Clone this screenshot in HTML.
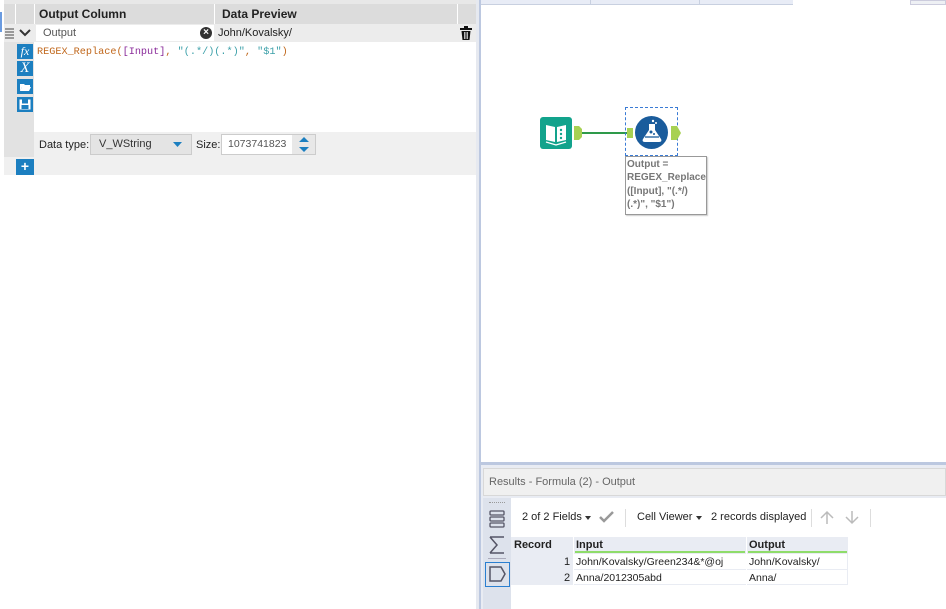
<!DOCTYPE html>
<html><head><meta charset="utf-8"><style>
*{margin:0;padding:0;box-sizing:border-box}
body{width:946px;height:609px;overflow:hidden;background:#fff;font-family:"Liberation Sans",sans-serif;font-size:11px;color:#222;position:relative}
.a{position:absolute}
.mono{font-family:"Liberation Mono",monospace}
</style></head><body>
<div class="a" style="left:0;top:0;width:478px;height:609px;background:#fff"></div>
<div class="a" style="left:0;top:12px;width:2px;height:20px;background:#6a9be0"></div>
<div class="a" style="left:4px;top:0;width:472px;height:4px;background:#e8e8e8"></div>
<div class="a" style="left:4px;top:4px;width:472px;height:20px;background:#dcdcdc"></div>
<div class="a" style="left:15px;top:4px;width:1px;height:171px;background:#fff"></div>
<div class="a" style="left:34px;top:4px;width:1px;height:20px;background:#fff"></div>
<div class="a" style="left:214px;top:4px;width:1px;height:20px;background:#fff"></div>
<div class="a" style="left:457px;top:4px;width:1px;height:20px;background:#fff"></div>
<div class="a" style="left:39px;top:7px;font-weight:bold;font-size:12px">Output Column</div>
<div class="a" style="left:222px;top:7px;font-weight:bold;font-size:12px">Data Preview</div>
<div class="a" style="left:4px;top:24px;width:472px;height:18px;background:#ececec"></div>
<div class="a" style="left:4px;top:42px;width:30px;height:115px;background:#e2e2e2"></div>
<div class="a" style="left:5px;top:28px;width:9px;height:1.5px;background:#999;box-shadow:0 3px #999,0 6px #999,0 9px #999"></div>
<svg class="a" style="left:19px;top:28px" width="12" height="10"><path d="M1 2l5 5 5-5" stroke="#333" stroke-width="2" fill="none"/></svg>
<div class="a" style="left:36px;top:25px;width:178px;height:16px;background:#fff"></div>
<div class="a" style="left:43px;top:27px;color:#555;font-size:11px">Output</div>
<div class="a" style="left:200px;top:27px;width:12px;height:12px;border-radius:50%;background:#333;color:#fff;font-size:10px;line-height:12px;text-align:center;font-weight:bold">×</div>
<div class="a" style="left:218px;top:27px;font-size:11px">John/Kovalsky/</div>
<svg class="a" style="left:460px;top:26px" width="12" height="14"><rect x="0" y="2" width="12" height="2" fill="#111"/><rect x="4" y="0" width="4" height="2" fill="#111"/><path d="M1.5 5h9l-1 9h-7z" fill="#111"/><path d="M4.5 6v7M6 6v7M7.5 6v7" stroke="#fff" stroke-width=".7"/></svg>
<div class="a" style="left:34px;top:42px;width:442px;height:90px;background:#fff"></div>
<div class="a" style="left:17px;top:44px;width:16px;height:15px;background:#1c7fc0;color:#fff;font-family:'Liberation Serif',serif;font-style:italic;font-size:12px;text-align:center;line-height:14px">fx</div>
<div class="a" style="left:17px;top:61px;width:16px;height:15px;background:#1c7fc0;color:#fff;font-family:'Liberation Serif',serif;font-style:italic;font-size:15px;text-align:center;line-height:15px">X</div>
<div class="a" style="left:17px;top:79px;width:16px;height:15px;background:#1c7fc0"></div>
<svg class="a" style="left:19px;top:82px" width="12" height="10"><path d="M1 2h4l1 1h5v2H3L1 9z" fill="#fff"/><path d="M3 5h9l-2 4H1z" fill="#fff"/></svg>
<div class="a" style="left:17px;top:97px;width:16px;height:15px;background:#1c7fc0"></div>
<svg class="a" style="left:19px;top:99px" width="12" height="11"><rect x="0.5" y="0.5" width="11" height="10" fill="#fff"/><rect x="3" y="0.5" width="6" height="4" fill="#1c7fc0"/><rect x="2.5" y="6" width="7" height="4" fill="#1c7fc0"/></svg>
<div class="a mono" style="left:37px;top:47px;font-size:10.2px;white-space:pre"><span style="color:#c0661a">REGEX_Replace(</span><span style="color:#8a2b9a">[Input]</span><span style="color:#c0661a">, </span><span style="color:#3a9fa8">"(.*/)(.*)"</span><span style="color:#c0661a">, </span><span style="color:#3a9fa8">"$1"</span><span style="color:#c0661a">)</span></div>
<div class="a" style="left:34px;top:132px;width:442px;height:25px;background:#f0f0f0"></div>
<div class="a" style="left:39px;top:139px;font-size:11px">Data type:</div>
<div class="a" style="left:90px;top:134px;width:102px;height:21px;background:#e4e4e4;border:1px solid #ccc"></div>
<div class="a" style="left:99px;top:138px;font-size:11px;color:#333">V_WString</div>
<svg class="a" style="left:173px;top:142px" width="9" height="5"><path d="M0 0h9L4.5 5z" fill="#1c7fc0"/></svg>
<div class="a" style="left:196px;top:139px;font-size:11px">Size:</div>
<div class="a" style="left:221px;top:134px;width:95px;height:21px;background:#fff;border:1px solid #ccc"></div>
<div class="a" style="left:228px;top:138px;font-size:10.5px;color:#555">1073741823</div>
<div class="a" style="left:292px;top:135px;width:23px;height:19px;background:#e8e8e8"></div>
<svg class="a" style="left:299px;top:137px" width="10" height="15"><path d="M0 5L5 0l5 5z M0 10l5 5 5-5z" fill="#1c7fc0"/></svg>
<div class="a" style="left:4px;top:157px;width:472px;height:18px;background:#f0f0f0"></div>
<div class="a" style="left:16px;top:159px;width:18px;height:16px;background:#1c7fc0;color:#fff;font-weight:bold;font-size:14px;text-align:center;line-height:15px">+</div>
<div class="a" style="left:476px;top:0;width:4px;height:609px;background:#e6e9f0"></div>
<div class="a" style="left:479px;top:0;width:2px;height:609px;background:#bcc8e0"></div>
<div class="a" style="left:481px;top:0;width:465px;height:464px;background:#fff"></div>
<div class="a" style="left:481px;top:0;width:312px;height:5px;background:#e8ecf6;border-bottom:1px solid #c8d0e0"></div>
<div class="a" style="left:590px;top:0;width:1px;height:5px;background:#c8d0e0"></div>
<div class="a" style="left:699px;top:0;width:1px;height:5px;background:#c8d0e0"></div>
<div class="a" style="left:910px;top:0;width:36px;height:5px;background:#eef0f4;border:1px solid #ccd"></div>
<div class="a" style="left:481px;top:462px;width:465px;height:3px;background:#bcc8e0"></div>
<div class="a" style="left:540px;top:117px;width:32px;height:32px;background:#12a38c;border-radius:3px"></div>
<svg class="a" style="left:543px;top:121px" width="26" height="26"><path d="M3 4l9 2v15l-9-2z M23 4l-9 2v15l9-2z" fill="#fff"/><circle cx="18" cy="9" r="1.2" fill="#12a38c"/><circle cx="18" cy="13" r="1.2" fill="#12a38c"/><circle cx="18" cy="17" r="1.2" fill="#12a38c"/><path d="M3 21l10 3 10-3" stroke="#fff" stroke-width="1.3" fill="none"/></svg>
<svg class="a" style="left:574px;top:126px" width="8" height="14"><path d="M0 0h5l3 3v8l-3 3H0z" fill="#a7d153"/></svg>
<div class="a" style="left:582px;top:132px;width:45px;height:2px;background:#2e9a4a"></div>
<div class="a" style="left:625px;top:107px;width:53px;height:49px;border:1px dashed #3a7bd5"></div>
<div class="a" style="left:627px;top:128px;width:6px;height:10px;background:#a7d153"></div>
<div class="a" style="left:635px;top:116px;width:33px;height:33px;border-radius:50%;background:#1a5c9c"></div>
<svg class="a" style="left:638px;top:118px" width="28" height="28"><path d="M11 6v6l-6 9c-1 2 0 3 2 3h14c2 0 3-1 2-3l-6-9V6z" fill="#fff"/><path d="M7 19h14" stroke="#1a5c9c" stroke-width="1.3"/><circle cx="13" cy="14" r="1.5" fill="#1a5c9c"/><circle cx="16" cy="16" r="1" fill="#1a5c9c"/><circle cx="15" cy="3" r="1.2" fill="#fff"/><circle cx="18" cy="5" r="1" fill="#fff"/></svg>
<svg class="a" style="left:671px;top:126px" width="10" height="14"><path d="M0 0h6l4 7-4 7H0z" fill="#a7d153"/></svg>
<div class="a" style="left:625px;top:156px;width:82px;height:59px;border:1px solid #999;background:#fff;box-shadow:1px 1px 1px #ccc"></div>
<div class="a" style="left:627px;top:158px;font-size:10px;line-height:13.3px;color:#777;font-weight:bold">Output =<br>REGEX_Replace<br>([Input], "(.*/)<br>(.*)", "$1")</div>
<div class="a" style="left:481px;top:465px;width:465px;height:144px;background:#e9ecf3"></div>
<div class="a" style="left:483px;top:468px;width:463px;height:28px;background:#f0f0f0;border:1px solid #d8d8d8"></div>
<div class="a" style="left:489px;top:476px;font-size:11px;color:#666">Results - Formula (2) - Output</div>
<div class="a" style="left:483px;top:498px;width:28px;height:111px;background:#dde2ec"></div>
<div class="a" style="left:489px;top:502px;width:16px;height:1px;border-top:1px dotted #999"></div>
<svg class="a" style="left:489px;top:510px" width="16" height="18"><rect x="1" y="1" width="14" height="4" rx="1" stroke="#556" fill="none" stroke-width="1.3"/><rect x="1" y="7" width="14" height="4" rx="1" stroke="#556" fill="none" stroke-width="1.3"/><rect x="1" y="13" width="14" height="4" rx="1" stroke="#556" fill="none" stroke-width="1.3"/></svg>
<svg class="a" style="left:489px;top:536px" width="16" height="18"><path d="M1 1h14M1 17h14M1 1l7 8-7 8" stroke="#556" fill="none" stroke-width="1.5"/></svg>
<div class="a" style="left:488px;top:558px;width:18px;height:1px;background:#aab"></div>
<div class="a" style="left:485px;top:562px;width:25px;height:25px;border:1px solid #2a7fd0"></div>
<svg class="a" style="left:489px;top:566px" width="18" height="16"><path d="M1 1h11l4 7-4 7H1z" stroke="#556" fill="none" stroke-width="1.5"/></svg>
<div class="a" style="left:511px;top:498px;width:435px;height:40px;background:#fff"></div>
<div class="a" style="left:511px;top:538px;width:435px;height:71px;background:#fff"></div>
<div class="a" style="left:522px;top:511px;font-size:11px">2 of 2 Fields</div>
<svg class="a" style="left:585px;top:516px" width="6" height="4"><path d="M0 0h6L3 4z" fill="#333"/></svg>
<svg class="a" style="left:599px;top:511px" width="16" height="12"><path d="M1 6l4 4 9-9" stroke="#999" stroke-width="2.5" fill="none"/></svg>
<div class="a" style="left:625px;top:509px;width:1px;height:18px;background:#ddd"></div>
<div class="a" style="left:637px;top:511px;font-size:11px">Cell Viewer</div>
<svg class="a" style="left:696px;top:516px" width="6" height="4"><path d="M0 0h6L3 4z" fill="#333"/></svg>
<div class="a" style="left:711px;top:511px;font-size:11px">2 records displayed</div>
<div class="a" style="left:811px;top:509px;width:1px;height:18px;background:#ddd"></div>
<svg class="a" style="left:820px;top:510px" width="14" height="15"><path d="M7 14V2M1 8l6-6 6 6" stroke="#bbb" stroke-width="1.5" fill="none"/></svg>
<svg class="a" style="left:845px;top:510px" width="14" height="15"><path d="M7 1v12M1 7l6 6 6-6" stroke="#bbb" stroke-width="1.5" fill="none"/></svg>
<div class="a" style="left:870px;top:509px;width:1px;height:18px;background:#ddd"></div>
<div class="a" style="left:511px;top:537px;width:337px;height:48px;background:#e9ecf3"></div>
<div class="a" style="left:514px;top:539px;font-weight:bold;font-size:11px">Record</div>
<div class="a" style="left:573px;top:537px;width:1px;height:48px;background:#fff"></div>
<div class="a" style="left:746px;top:537px;width:1px;height:48px;background:#fff"></div>
<div class="a" style="left:576px;top:539px;font-weight:bold;font-size:11px">Input</div>
<div class="a" style="left:749px;top:539px;font-weight:bold;font-size:11px">Output</div>
<div class="a" style="left:575px;top:551px;width:170px;height:2px;background:#8fdc6a"></div>
<div class="a" style="left:748px;top:551px;width:99px;height:2px;background:#8fdc6a"></div>
<div class="a" style="left:574px;top:554px;width:172px;height:15px;background:#fff"></div>
<div class="a" style="left:747px;top:554px;width:100px;height:15px;background:#fff"></div>
<div class="a" style="left:574px;top:570px;width:172px;height:14px;background:#fff"></div>
<div class="a" style="left:747px;top:570px;width:100px;height:14px;background:#fff"></div>
<div class="a" style="left:564px;top:556px;font-size:11px">1</div>
<div class="a" style="left:564px;top:572px;font-size:11px">2</div>
<div class="a" style="left:576px;top:556px;font-size:10.5px">John/Kovalsky/Green234&amp;*@oj</div>
<div class="a" style="left:576px;top:572px;font-size:10.5px">Anna/2012305abd</div>
<div class="a" style="left:749px;top:556px;font-size:10.5px">John/Kovalsky/</div>
<div class="a" style="left:749px;top:572px;font-size:10.5px">Anna/</div>
</body></html>
